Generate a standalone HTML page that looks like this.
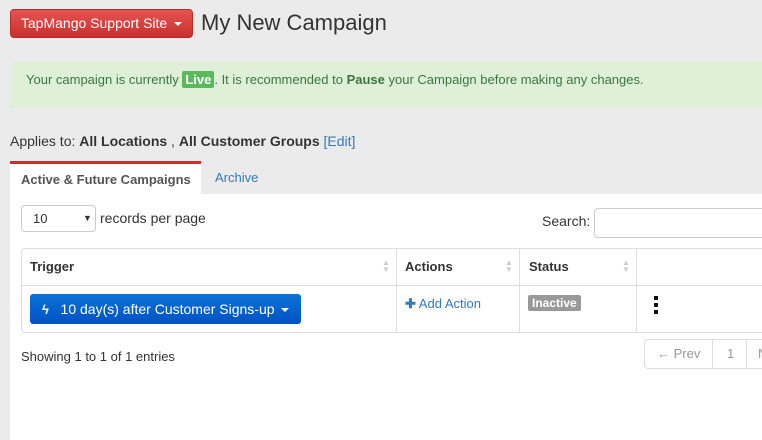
<!DOCTYPE html>
<html><head><style>
body{margin:0;width:762px;height:440px;overflow:hidden;background:#ebebeb;font-family:"Liberation Sans",sans-serif;font-size:13px;color:#333;position:relative}
.a{position:absolute}
.btn{left:10px;top:9px;width:183px;height:29px;background:linear-gradient(#e55453,#c9302c);border:1px solid #b92c28;border-radius:4px;box-sizing:border-box;color:#fff;font-size:14px;line-height:27px;text-align:center}
.caret{display:inline-block;width:0;height:0;border-left:4px solid transparent;border-right:4px solid transparent;border-top:4px solid #fff;vertical-align:middle;margin-left:3px}
</style></head><body>
<div class="a btn">TapMango Support Site <span class="caret"></span></div>
<div class="a" style="left:201px;top:9px;font-size:22px;line-height:28px;color:#333">My New Campaign</div>
<div class="a" style="left:10px;top:62px;width:752px;height:46px;background:#dff0d8;color:#3c763d;font-size:13px;line-height:36px;padding-left:16px;box-sizing:border-box">Your campaign is currently <span style="background:#5cb85c;color:#fff;font-weight:bold;padding:1px 3px;border-radius:2px">Live</span>. It is recommended to <b>Pause</b> your Campaign before making any changes.</div>
<div class="a" style="left:10px;top:133px;font-size:14px">Applies to: <b>All Locations</b> , <b>All Customer Groups</b> <span style="color:#337ab7">[Edit]</span></div>
<div class="a" style="left:10px;top:161px;width:191px;height:34px;background:#fff;border-top:3px solid #c9302c;box-sizing:border-box;font-weight:bold;color:#555;line-height:32px;padding-left:11px">Active &amp; Future Campaigns</div>
<div class="a" style="left:215px;top:170px;color:#337ab7">Archive</div>
<div class="a" style="left:10px;top:194px;width:752px;height:246px;background:#fff"></div>
<div class="a" style="left:21px;top:205px;width:75px;height:27px;border:1px solid #ccc;border-radius:4px;box-sizing:border-box;padding-left:11px;line-height:25px">10<span style="position:absolute;left:61px;font-size:9px">▼</span></div>
<div class="a" style="left:100px;top:210px;font-size:14px">records per page</div>
<div class="a" style="left:542px;top:213px;font-size:14px">Search:</div>
<div class="a" style="left:594px;top:208px;width:180px;height:30px;border:1px solid #ccc;border-radius:4px;box-sizing:border-box"></div>
<div class="a" style="left:21px;top:248px;width:760px;height:85px;border:1px solid #ddd;border-radius:4px;box-sizing:border-box"></div>
<div class="a" style="left:22px;top:285px;width:740px;height:1px;background:#ddd"></div>
<div class="a" style="left:396px;top:249px;width:1px;height:83px;background:#ddd"></div>
<div class="a" style="left:519px;top:249px;width:1px;height:83px;background:#ddd"></div>
<div class="a" style="left:636px;top:249px;width:1px;height:83px;background:#ddd"></div>
<div class="a" style="left:30px;top:259px;font-weight:bold">Trigger</div>
<div class="a" style="left:405px;top:259px;font-weight:bold">Actions</div>
<div class="a" style="left:529px;top:259px;font-weight:bold">Status</div>
<div class="a" style="left:382px;top:259px;color:#ccc;font-size:8px;line-height:7px">▲<br>▼</div>
<div class="a" style="left:505px;top:259px;color:#ccc;font-size:8px;line-height:7px">▲<br>▼</div>
<div class="a" style="left:622px;top:259px;color:#ccc;font-size:8px;line-height:7px">▲<br>▼</div>
<div class="a" style="left:30px;top:294px;width:271px;height:30px;background:linear-gradient(#0b73d8,#0052c2);border-radius:3px;color:#fff;font-size:14px;line-height:30px;padding-left:12px;box-sizing:border-box"><b style="font-size:13px">ϟ</b>&nbsp;&nbsp; 10 day(s) after Customer Signs-up <span class="caret"></span></div>
<div class="a" style="left:405px;top:296px;color:#337ab7"><b>✚</b> Add Action</div>
<div class="a" style="left:528px;top:295px;background:#999;color:#fff;font-weight:bold;font-size:12px;padding:1px 4px;border-radius:2px">Inactive</div>
<div class="a" style="left:654px;top:296px;width:4px">
<div style="width:4px;height:4px;background:#111;margin-bottom:3px"></div><div style="width:4px;height:4px;background:#111;margin-bottom:3px"></div><div style="width:4px;height:4px;background:#111"></div></div>
<div class="a" style="left:21px;top:349px">Showing 1 to 1 of 1 entries</div>
<div class="a" style="left:644px;top:339px;width:130px;height:30px;border:1px solid #ddd;border-radius:4px;box-sizing:border-box;color:#999;line-height:28px;font-size:13px">
<span style="position:absolute;left:12px">← Prev</span>
<span style="position:absolute;left:67px;top:0;height:28px;border-left:1px solid #ddd"></span>
<span style="position:absolute;left:82px">1</span>
<span style="position:absolute;left:101px;top:0;height:28px;border-left:1px solid #ddd"></span>
<span style="position:absolute;left:113px">N</span></div>
</body></html>
